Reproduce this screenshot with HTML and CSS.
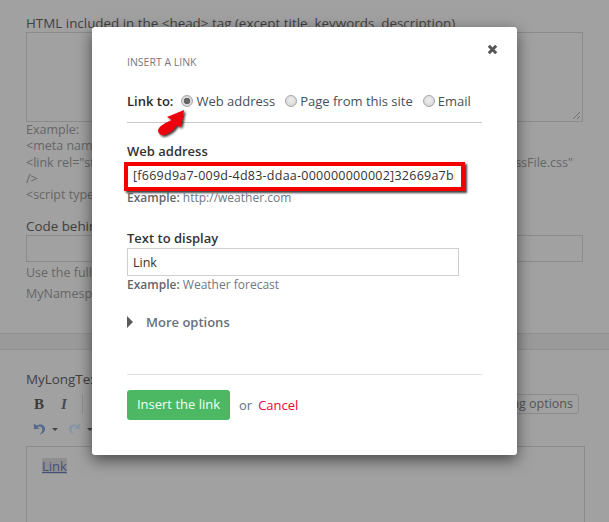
FILE: index.html
```html
<!DOCTYPE html>
<html lang="en">
<head>
<meta charset="utf-8">
<title>Insert a link</title>
<link rel="stylesheet" href="styles.css">
</head>
<body>
<div class="page">
  <section class="top">
    <div class="label">HTML included in the &lt;head&gt; tag (except title, keywords, description)</div>
    <div class="textarea">
      <svg class="grip" width="9" height="9" viewBox="0 0 9 9"><path d="M1 8 8 1M5 8 8 5" stroke="#6e6e6e" fill="none"/></svg>
    </div>
    <div class="hint hint-block">
      <div>Example:</div>
      <div>&lt;meta name="description" content="Description of the page" /&gt;</div>
      <div class="wrapline"><span>&lt;link rel="stylesheet" type="text/css" href="</span><span>ssFile.css"</span></div>
      <div>/&gt;</div>
      <div>&lt;script type="text/javascript" src="file.js"&gt;&lt;/script&gt;</div>
    </div>
    <div class="label label-code">Code behind</div>
    <div class="field"></div>
    <div class="hint hint-use">Use the fully qualified name of the class</div>
    <div class="hint hint-ns">MyNamespace.MyClass</div>
  </section>
  <div class="band"></div>
  <section class="bottom">
    <div class="label">MyLongText</div>
    <div class="toolbar">
      <span class="tool-b">B</span>
      <span class="tool-i">I</span>
      <span class="tool-sep"></span>
      <span class="tool-options">Editing options</span>
    </div>
    <div class="toolbar2">
      <svg width="15" height="16" viewBox="0 0 16 16"><path d="M2 2v6h6L6 6c2-1.500 5-.5 5 2.500 0 2-1 3.500-3 5.500 4-1 6-3.500 6-6 0-4.500-5.500-6.500-8.500-3.500z" fill="#566a90"/></svg>
      <span class="caret"></span>
      <svg class="redo" width="15" height="16" viewBox="0 0 16 16"><path d="M14 2v6H8l2-2C8 4.500 5 5.500 5 8.500c0 2 1 3.500 3 5.500-4-1-6-3.500-6-6 0-4.500 5.500-6.500 8.500-3.500z" fill="#8795a8"/></svg>
      <span class="caret"></span>
    </div>
    <div class="editor"><a class="editor-link">Link</a></div>
  </section>
</div>

<div class="overlay-modal">
  <button class="close" aria-label="Close">
    <svg width="11" height="11" viewBox="0 0 11 11"><path d="M1.800 1.800 9.200 9.200M9.200 1.800 1.800 9.200" stroke="#555" stroke-width="3"/></svg>
  </button>
  <h2 class="title">INSERT A LINK</h2>
  <div class="link-to">
    <span class="link-label">Link to:</span>
    <span class="radio-item"><span class="radio on"></span>Web address</span>
    <span class="radio-item"><span class="radio"></span>Page from this site</span>
    <span class="radio-item"><span class="radio"></span>Email</span>
    <svg class="arrow" width="34" height="32" viewBox="0 0 34 32"><defs><filter id="s" x="-30%" y="-30%" width="170%" height="170%"><feDropShadow dx="1.500" dy="1.500" stdDeviation="1.200" flood-color="#000" flood-opacity=".85"/></filter></defs><path d="M29 3 12 10 17 13C12 15 5 18 3 23 3 26 6 29 9 28 14 27 20 22 22 18L26 20z" fill="#ee0008" filter="url(#s)"/></svg>
  </div>
  <label class="form-label first">Web address</label>
  <div class="highlight"><input class="input input-url" value="[f669d9a7-009d-4d83-ddaa-000000000002]32669a7bbbbbbb"></div>
  <div class="example example-url"><b>Example:</b> http://weather.com</div>
  <label class="form-label second">Text to display</label>
  <input class="input input-text" value="Link">
  <div class="example example-text"><b>Example:</b> Weather forecast</div>
  <div class="more"><span class="tri"></span>More options</div>
  <div class="footer">
    <button class="insert">Insert the link</button>
    <span class="or">or</span>
    <a class="cancel">Cancel</a>
  </div>
</div>
</body>
</html>
```
FILE: styles.css
```css
* { box-sizing: border-box; }
html, body { margin: 0; padding: 0; }
body {
  width: 609px;
  height: 522px;
  overflow: hidden;
  background: #a1a1a1;
  font-family: "Open Sans", "Liberation Sans", sans-serif;
  font-size: 13px;
  color: #5f5f5f;
  position: relative;
}
.page { height: 522px; overflow: hidden; }
.top { padding: 14px 26px 0; height: 333px; }
.label { color: #404040; font-size: 13.400px; line-height: 18px; }
.textarea {
  position: relative;
  height: 90px;
  width: 557px;
  border: 1px solid #8b8b8b;
}
.grip { position: absolute; right: 1px; bottom: 1px; }
.hint { color: #666; font-size: 12.500px; line-height: 16px; }
.hint-block div { height: 16.300px; line-height: 16.300px; white-space: nowrap; }
.wrapline { display: flex; justify-content: space-between; width: 547px; }
.label-code { margin-top: 14px; }
.field { width: 557px; height: 27px; border: 1px solid #8b8b8b; }
.hint-use { margin-top: 3px; }
.hint-ns { margin-top: 5px; }
.band { height: 17px; background: #999a99; border-top: 1px solid #919191; border-bottom: 1px solid #919191; }
.bottom { padding: 19px 24px 0 26px; }
.bottom .label { line-height: 20px; }
.toolbar { display: flex; align-items: center; height: 20px; margin-top: 5px; position: relative; }
.tool-b { font-family: "Liberation Serif", serif; font-weight: 700; font-size: 15px; color: #3c3c3c; margin-left: 8px; }
.tool-i { font-family: "Liberation Serif", serif; font-style: italic; font-weight: 700; font-size: 15px; color: #4b4b4b; margin-left: 17px; }
.tool-sep { width: 1px; height: 20px; background: #8f8f8f; margin-left: 15px; }
.tool-options {
  margin-left: auto;
  margin-right: 6px;
  height: 20px;
  line-height: 18px;
  padding: 0 5px;
  border: 1px solid #8c8c8c;
  border-radius: 3px;
  font-size: 12.500px;
  color: #555;
}
.toolbar2 { display: flex; align-items: center; height: 16px; margin-top: 7px; padding-left: 6px; }
.caret { width: 0; height: 0; border: 3px solid transparent; border-top: 3px solid #444; border-bottom: 0; margin-left: 5px; }
.redo { margin-left: 9px; }
.editor { height: 90px; width: 559px; margin-top: 9px; border: 1px solid #8b8b8b; padding: 10px 15px; }
.editor-link { color: #46507d; text-decoration: underline; font-size: 13px; background: #8f8f8f; line-height: 16px; display: inline-block; }

.overlay-modal {
  position: absolute;
  left: 92px;
  top: 27px;
  width: 425px;
  height: 428px;
  background: #fff;
  border-radius: 3px;
  box-shadow: 0 5px 15px rgba(0, 0, 0, .55);
  padding: 0 35px;
  color: #444;
}
.close { position: absolute; top: 17px; right: 19px; padding: 0; margin: 0; border: 0; background: none; line-height: 0; }
.title { margin: 0; padding-top: 28px; font-size: 10.500px; line-height: 15px; font-weight: 400; color: #77777f; }
.link-to {
  position: relative;
  display: flex;
  align-items: center;
  margin-top: 24px;
  height: 29px;
  padding-bottom: 14px;
  border-bottom: 1px solid #c9c9c9;
  font-size: 13px;
  color: #44505c;
  width: 355px;
  white-space: nowrap;
}
.link-label { color: #2b2b2b; font-weight: 600; font-size: 13px; margin-right: 8px; }
.radio-item { display: inline-flex; align-items: center; margin-right: 10px; }
.radio-item:last-of-type { margin-right: 0; }
.radio {
  width: 12px;
  height: 12px;
  margin-right: 3px;
  border-radius: 50%;
  border: 1px solid #a6a6a6;
  background: radial-gradient(circle at 50% 40%, #f0f0f0, #cfcfcf);
  flex: none;
}
.radio.on { background: radial-gradient(circle, #666 0 3px, #d9d9d9 3.500px); }
.arrow { position: absolute; left: 28px; top: 13px; }
.form-label { display: block; font-size: 13px; font-weight: 600; color: #333; line-height: 18px; }
.form-label.first { margin-top: 19px; }
.form-label.second { margin-top: 23px; }
.input {
  display: block;
  font-family: "Open Sans", "Liberation Sans", sans-serif;
  font-size: 12.500px;
  color: #333;
  background: #fff;
  outline: 0;
}
.highlight {
  width: 341px;
  height: 29px;
  margin-left: -3px;
  margin-top: 2px;
  border: 4px solid #f40000;
  box-shadow: 2px 2px 2px rgba(0, 0, 0, .75);
}
.input-url { width: 333px; height: 21px; border: 0; padding: 0 6px 3px 5px; letter-spacing: .25px; }
.input-text { width: 332px; height: 28px; border: 1px solid #cfcfcf; padding: 0 5px; margin-top: 1px; }
.example { font-size: 12px; line-height: 16px; color: #6f7780; }
.example-url { margin-top: -1px; }
.example-text { margin-top: 1px; }
.example b { font-weight: 600; color: #666; }
.more { display: flex; align-items: center; margin-top: 20px; height: 18px; font-size: 13px; font-weight: 600; color: #68707a; }
.tri { width: 0; height: 0; border: 6px solid transparent; border-left: 6px solid #5a5a5a; border-right: 0; margin-right: 13px; }
.footer {
  display: flex;
  align-items: center;
  margin-top: 43px;
  padding-top: 15px;
  border-top: 1px solid #e3e3e3;
  width: 355px;
}
.insert {
  height: 30px;
  width: 103px;
  padding: 0 0 2px;
  border: 0;
  border-radius: 3px;
  background: #4cb863;
  color: #f2fff4;
  font-family: "Open Sans", "Liberation Sans", sans-serif;
  font-size: 13px;
}
.or { margin-left: 9px; font-size: 13px; color: #66707c; }
.cancel { margin-left: 6px; font-size: 13px; color: #f00030; }
```
